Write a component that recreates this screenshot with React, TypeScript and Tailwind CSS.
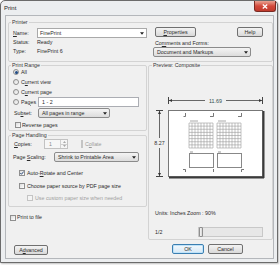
import React from 'react'

type Kids = { children?: React.ReactNode; className?: string }

const Group = ({ title, legend, className, children }: Kids & { title: string; legend: string }) => (
  <div className={`relative border border-[#d3d3d3] rounded-[2px] ${className ?? ''}`}>
    <span className={`absolute -top-[4px] ${legend} bg-[#f0f0f0] px-[1px] leading-[7px] text-[#333]`}>{title}</span>
    {children}
  </div>
)

const Box = ({ checked, disabled }: { checked?: boolean; disabled?: boolean }) => (
  <span
    className={
      disabled
        ? 'w-[6px] h-[6px] shrink-0 border border-[#c4c4c4] bg-[#f4f4f4]'
        : 'w-[6px] h-[6px] shrink-0 border border-[#8f8f8f] bg-gradient-to-br from-[#dcdcdc] to-white flex items-center justify-center'
    }
  >
    {checked && (
      <svg width="4" height="4" viewBox="0 0 4 4">
        <path d="M0.3 2 L1.5 3.3 L3.7 0.5" fill="none" stroke="#1c3c6e" strokeWidth="0.9" />
      </svg>
    )}
  </span>
)

const Radio = ({ on }: { on?: boolean }) => (
  <span className="w-[6px] h-[6px] shrink-0 rounded-full border border-[#8f8f8f] bg-gradient-to-br from-[#d8d8d8] to-white flex items-center justify-center">
    {on && <span className="w-[3px] h-[3px] rounded-full bg-[#1f4a84]" />}
  </span>
)

const Arrow = () => (
  <svg width="4" height="3" viewBox="0 0 4 3" className="mr-[2px] shrink-0">
    <path d="M0 0.3 H4 L2 2.7 Z" fill="#222" />
  </svg>
)

const Combo = ({ text, className }: { text: string; className: string }) => (
  <div className={`h-[10px] flex items-center border border-[#8b8b8b] rounded-[2px] bg-gradient-to-b from-[#f4f4f4] to-[#dcdcdc] ${className}`}>
    <span className="flex-1 pl-[3px] whitespace-nowrap overflow-hidden">{text}</span>
    <Arrow />
  </div>
)

const Btn = ({ children, className }: Kids) => (
  <div className={`h-[10px] flex items-center justify-center border border-[#707070] rounded-[2px] bg-gradient-to-b from-[#f3f3f3] to-[#d9d9d9] ${className ?? ''}`}>
    {children}
  </div>
)

const U = ({ children }: Kids) => <span className="underline underline-offset-[1px]">{children}</span>

const Preview = () => {
  const cols = [0, 1, 2, 3, 4, 5, 6, 7, 8]
  const rows = [0, 1, 2, 3, 4, 5, 6, 7, 8]
  const grid = (x0: number) => (
    <g stroke="#9a9a9a" strokeWidth="0.6">
      {cols.map((c) => (
        <line key={'c' + c} x1={x0 + c * 3} y1={29} x2={x0 + c * 3} y2={54} />
      ))}
      {rows.map((r) => (
        <line key={'r' + r} x1={x0} y1={29 + r * 3.125} x2={x0 + 24} y2={29 + r * 3.125} />
      ))}
      <line x1={x0 + 1} y1={27} x2={x0 + 9} y2={27} stroke="#a8a8a8" strokeWidth="1" />
    </g>
  )
  return (
    <svg width="123" height="90" viewBox="0 0 123 90" className="block">
      {/* width */}
      <g stroke="#444" strokeWidth="1">
        <line x1="19.5" y1="3" x2="19.5" y2="10" />
        <line x1="113.5" y1="3" x2="113.5" y2="10" />
        <line x1="20" y1="6.5" x2="56" y2="6.5" strokeWidth="0.8" />
        <line x1="77" y1="6.5" x2="113" y2="6.5" strokeWidth="0.8" />
      </g>
      <path d="M20 6.5 L23 5 V8 Z" fill="#333" />
      <path d="M113 6.5 L110 5 V8 Z" fill="#333" />
      <text x="66.5" y="8.5" fontSize="5.3" textAnchor="middle" fill="#2f4f4f" fontFamily="Liberation Sans, sans-serif">11.69</text>

      {/* height */}
      <g stroke="#444" strokeWidth="1">
        <line x1="7" y1="16.5" x2="14" y2="16.5" />
        <line x1="7" y1="82.5" x2="14" y2="82.5" />
        <line x1="10.5" y1="17" x2="10.5" y2="44" strokeWidth="0.8" />
        <line x1="10.5" y1="54" x2="10.5" y2="82" strokeWidth="0.8" />
      </g>
      <path d="M10.5 17 L9 20 H12 Z" fill="#333" />
      <path d="M10.5 82 L9 79 H12 Z" fill="#333" />
      <text x="10.5" y="51" fontSize="5.3" textAnchor="middle" fill="#333" fontFamily="Liberation Sans, sans-serif">8.27</text>

      {/* page */}
      <rect x="19.5" y="16.5" width="94" height="66" fill="#fff" stroke="#777" />
      <line x1="114.5" y1="17" x2="114.5" y2="84" stroke="#3a3a3a" strokeWidth="2" />
      <line x1="20" y1="83.5" x2="115" y2="83.5" stroke="#3a3a3a" strokeWidth="2" />

      {grid(40)}
      {grid(68)}
      <rect x="40.5" y="59.5" width="24" height="14" fill="none" stroke="#888" />
      <rect x="68.5" y="59.5" width="24" height="14" fill="none" stroke="#888" />
      <g stroke="#999" strokeWidth="1">
        <line x1="41" y1="58" x2="44" y2="58" />
        <line x1="69" y1="58" x2="72" y2="58" />
      </g>

      {/* crop marks */}
      <g stroke="#555" strokeWidth="0.8" fill="none">
        <path d="M36.5 19 V22.5 H34.5" />
        <path d="M61 22.5 H64.5 V19" />
        <path d="M89 22.5 H92.5 V19" />
        <path d="M34 75.5 H36.5 V78" />
        <path d="M64.5 75 V78" />
        <path d="M92.5 78 V75.5 H95" />
      </g>
    </svg>
  )
}

export default function App() {
  return (
    <div className="w-[280px] h-[265px] bg-white overflow-hidden font-['Liberation_Sans',Arial,sans-serif] text-[5.3px] leading-[7px] text-[#2a2a2a]">
      <div className="w-[278px] h-[263px] flex flex-col border border-[#6b6b6b] rounded-t-[5px] bg-[#eceef0] shadow-[1px_1px_2px_rgba(0,0,0,0.25)]">
        {/* title bar */}
        <div className="h-[14px] shrink-0 flex items-start">
          <span className="ml-[3px] mt-[3px] text-[6px] leading-[8px] text-[#222]">Print</span>
          <div className="ml-auto mr-[1px] w-[22px] h-[11px] flex items-center justify-center border border-[#7a2a22] border-t-0 rounded-b-[3px] bg-gradient-to-b from-[#e7a293] via-[#d2483b] to-[#c03a2c]">
            <svg width="6" height="5" viewBox="0 0 6 5">
              <path d="M0.8 0.5 L5.2 4.5 M5.2 0.5 L0.8 4.5" stroke="#fff" strokeWidth="1.3" />
            </svg>
          </div>
        </div>

        {/* client */}
        <div className="ml-[4px] mr-[3px] mb-[3px] flex-1 flex flex-col border border-[#b4b7bb] bg-[#f0f0f0]">
          <Group title="Printer" legend="left-[2px]" className="mt-[6px] ml-[2px] w-[265px] h-[40px] flex">
            <div className="w-[144px] pl-[4px] pt-[5px] flex flex-col">
              <div className="h-[10px] flex items-center">
                <span className="w-[24px]"><U>N</U>ame:</span>
                <div className="w-[110px] h-[10px] flex items-center border border-[#a9a9a9] bg-white">
                  <span className="flex-1 pl-[2px]">FinePrint</span>
                  <Arrow />
                </div>
              </div>
              <div className="h-[9px] flex items-center">
                <span className="w-[24px]">Status:</span>
                <span>Ready</span>
              </div>
              <div className="h-[9px] flex items-center">
                <span className="w-[24px]">Type:</span>
                <span>FinePrint 6</span>
              </div>
            </div>
            <div className="pt-[4px] flex flex-col">
              <div className="flex">
                <Btn className="ml-[2px] w-[41px]"><U>P</U>roperties</Btn>
                <Btn className="ml-[41px] w-[26px]">Help</Btn>
              </div>
              <div className="mt-[2px] h-[8px] pl-[2px] flex items-center">
                <span>Co<U>m</U>ments and Forms:</span>
              </div>
              <Combo text="Document and Markups" className="w-[98px]" />
            </div>
          </Group>

          <div className="mt-[3px] ml-[2px] flex gap-[1px] flex-1">
            {/* left column */}
            <div className="w-[139px] flex flex-col">
              <Group title="Print Range" legend="left-[2px]" className="h-[66px] pt-[1px] flex flex-col">
                <div className="h-[10px] pl-[4px] flex items-center gap-[2px]">
                  <Radio on />
                  <span>All</span>
                </div>
                <div className="h-[10px] pl-[4px] flex items-center gap-[2px]">
                  <Radio />
                  <span>C<U>u</U>rrent view</span>
                </div>
                <div className="h-[10px] pl-[4px] flex items-center gap-[2px]">
                  <Radio />
                  <span>C<U>u</U>rrent page</span>
                </div>
                <div className="h-[10px] pl-[4px] flex items-center gap-[2px]">
                  <Radio />
                  <span className="w-[15px]">Pa<U>g</U>es</span>
                  <div className="w-[101px] h-[10px] flex items-center border border-[#abadb3] bg-white pl-[3px]">1 - 2</div>
                </div>
                <div className="mt-[1px] h-[10px] pl-[5px] flex items-center">
                  <span className="w-[24px]">Su<U>b</U>set:</span>
                  <Combo text="All pages in range" className="w-[72px]" />
                </div>
                <div className="mt-[3px] h-[8px] pl-[6px] flex items-center gap-[1px]">
                  <Box />
                  <span>Reverse pages</span>
                </div>
              </Group>

              <Group title="Page Handling" legend="left-[2px]" className="mt-[4px] h-[72px] pt-[3px] flex flex-col">
                <div className="h-[10px] pl-[5px] flex items-center">
                  <span className="w-[30px]"><U>C</U>opies:</span>
                  <div className="w-[24px] h-[10px] flex border border-[#c2c2c2] bg-[#f6f6f6]">
                    <span className="flex-1 pl-[4px] flex items-center text-[#8a8a8a]">1</span>
                    <div className="w-[7px] flex flex-col border-l border-[#d0d0d0]">
                      <div className="flex-1 flex items-center justify-center border-b border-[#d0d0d0]">
                        <svg width="3" height="2" viewBox="0 0 3 2"><path d="M0 2 H3 L1.5 0 Z" fill="#a8a8a8" /></svg>
                      </div>
                      <div className="flex-1 flex items-center justify-center">
                        <svg width="3" height="2" viewBox="0 0 3 2"><path d="M0 0 H3 L1.5 2 Z" fill="#a8a8a8" /></svg>
                      </div>
                    </div>
                  </div>
                  <span className="ml-[13px]"><Box disabled /></span>
                  <span className="ml-[2px] text-[#9a9a9a]">C<U>o</U>llate</span>
                </div>
                <div className="mt-[3px] h-[10px] pl-[4px] flex items-center">
                  <span className="w-[41px]">Page <U>S</U>caling:</span>
                  <Combo text="Shrink to Printable Area" className="w-[85px]" />
                </div>
                <div className="mt-[7px] h-[8px] pl-[10px] flex items-center gap-[2px]">
                  <Box checked />
                  <span>Auto-<U>R</U>otate and Center</span>
                </div>
                <div className="mt-[5px] h-[8px] pl-[10px] flex items-center gap-[2px]">
                  <Box />
                  <span>Choose paper source by PDF page size</span>
                </div>
                <div className="mt-[4px] h-[8px] pl-[18px] flex items-center gap-[2px]">
                  <Box disabled />
                  <span className="text-[#a0a0a0]">Use custom paper size when needed</span>
                </div>
              </Group>

              <div className="mt-[6px] h-[9px] pl-[2px] flex items-center gap-[1px]">
                <Box />
                <span>Print to file</span>
              </div>

              <Btn className="mt-[23px] ml-[6px] w-[34px]">A<U>d</U>vanced</Btn>
            </div>

            {/* right column */}
            <div className="w-[125px] flex flex-col">
              <Group title="Preview: Composite" legend="left-[3px]" className="h-[175px] flex flex-col">
                <div className="mt-[28px]">
                  <Preview />
                </div>
                <div className="mt-[25px] h-[8px] pl-[6px] flex items-center">Units: Inches Zoom :  90%</div>
                <div className="mt-[10px] h-[10px] pl-[6px] flex items-center">
                  <span className="w-[43px]">1/2</span>
                  <div className="w-[65px] h-[10px] flex items-center border border-[#c8c8c8] bg-[#e7e7e7]">
                    <div className="w-[4px] h-[10px] border border-[#8f8f8f] rounded-[1px] bg-gradient-to-r from-[#f6f6f6] to-[#d6d6d6]" />
                  </div>
                </div>
              </Group>
              <div className="mt-[4px] pl-[24px] flex gap-[4px]">
                <div className="w-[32px] h-[10px] flex items-center justify-center border border-[#3c7fb1] rounded-[2px] bg-gradient-to-b from-[#f4f9fd] to-[#d6e8f5] shadow-[inset_0_0_0_1px_#bfe3f9]">OK</div>
                <Btn className="w-[35px]">Cancel</Btn>
              </div>
            </div>
          </div>
        </div>
      </div>
    </div>
  )
}
